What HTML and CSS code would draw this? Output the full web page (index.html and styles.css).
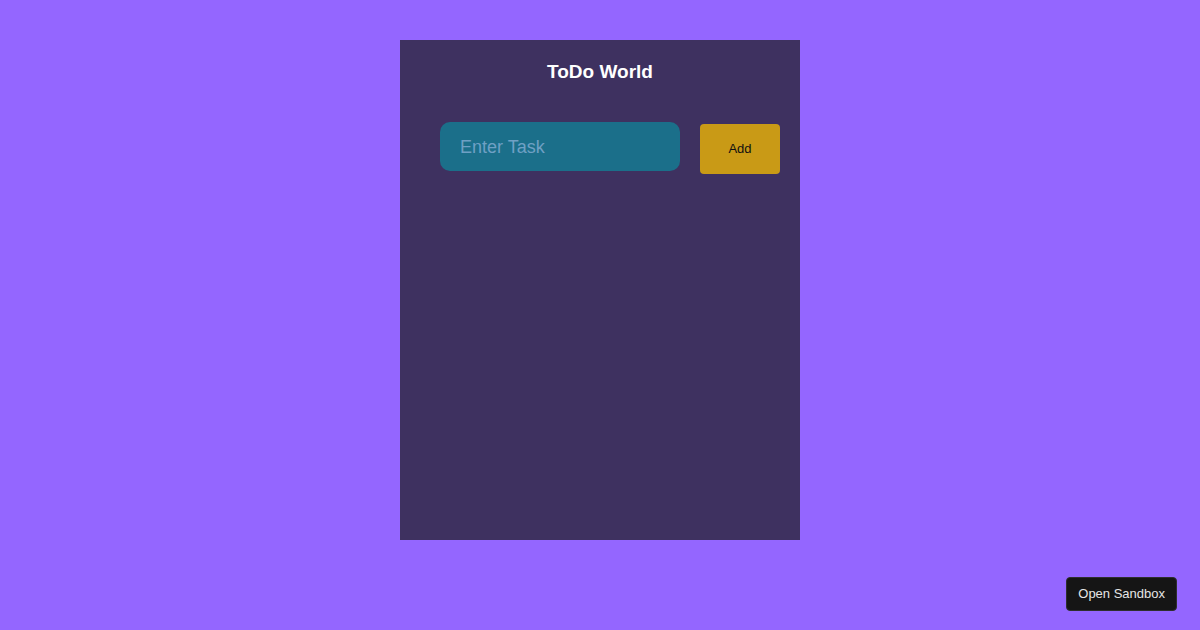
FILE: index.html
```html
<!DOCTYPE html>
<html lang="en">
<head>
  <meta charset="UTF-8">
  <meta name="viewport" content="width=device-width, initial-scale=1.0">
  <title>ToDo World</title>
  <link rel="stylesheet" href="styles.css">
</head>
<body>
  <div class="todo-app">
    <h1>ToDo World</h1>

    <div class="task-form">
      <input type="text" class="task-input" placeholder="Enter Task">
      <button class="add-btn">Add</button>
    </div>

    <ul class="task-list"></ul>
  </div>

  <a class="sandbox-btn" href="#">Open Sandbox</a>
</body>
</html>
```

FILE: styles.css
```css
body {
  margin: 0;
  background-color: #9466ff;
  font-family: "Liberation Sans", Arial, sans-serif;
}

.todo-app {
  width: 400px;
  height: 500px;
  margin: 40px auto 0;
  padding-top: 21px;
  box-sizing: border-box;
  background-color: #3e3160;
}

h1 {
  margin: 0;
  font-size: 19px;
  line-height: 22px;
  text-align: center;
  color: #fff;
}

.task-form {
  display: flex;
  align-items: flex-start;
  gap: 20px;
  margin-top: 39px;
  padding-left: 40px;
}

.task-input {
  width: 240px;
  height: 49px;
  padding: 2px 20px 0;
  border: none;
  border-radius: 10px;
  box-sizing: border-box;
  background-color: #1b6f8a;
  color: #fff;
  font-family: inherit;
  font-size: 18px;
  outline: none;
}

.task-input::placeholder {
  color: #6fa0c4;
}

.add-btn {
  width: 80px;
  height: 50px;
  margin-top: 2px;
  padding-bottom: 2px;
  border: none;
  border-radius: 4px;
  background-color: #c99a16;
  color: #111;
  font-family: inherit;
  font-size: 13px;
  cursor: pointer;
}

.task-list {
  list-style: none;
  margin: 0;
  padding: 0;
}

.sandbox-btn {
  position: fixed;
  right: 23px;
  bottom: 19px;
  padding: 9px 11px;
  border: 1px solid #2e2e2e;
  border-radius: 4px;
  background-color: #151515;
  color: #e6e6e6;
  font-size: 13px;
  line-height: 14px;
  text-decoration: none;
}
```
